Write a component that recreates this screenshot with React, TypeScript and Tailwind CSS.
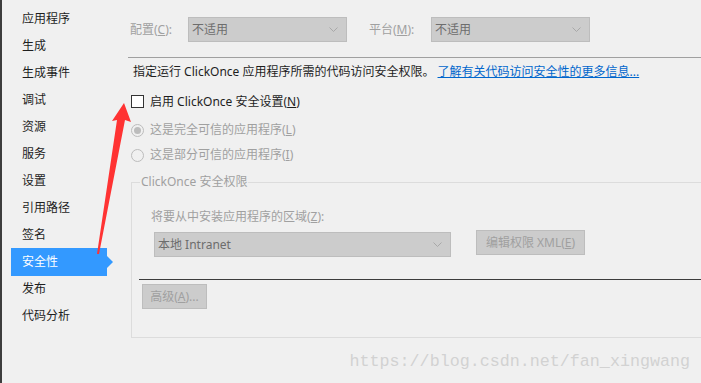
const navItems = [
  "应用程序",
  "生成",
  "生成事件",
  "调试",
  "资源",
  "服务",
  "设置",
  "引用路径",
  "签名",
  "安全性",
  "发布",
  "代码分析",
];

function Chevron() {
  return (
    <svg width="9" height="5" viewBox="0 0 9 5" className="shrink-0">
      <path d="M0.5 0.5 L4.5 4.5 L8.5 0.5" fill="none" stroke="#a8a8a8" strokeWidth="1" />
    </svg>
  );
}

function Dropdown({ value, width }: { value: string; width: string }) {
  return (
    <div
      className={`flex h-[25px] ${width} items-center justify-between border border-[#bdbdbd] bg-[#cccccc] pl-[3px] pr-[8px] text-[#6d6d6d]`}
    >
      <span>{value}</span>
      <Chevron />
    </div>
  );
}

function Sidebar() {
  return (
    <nav className="w-[126px] shrink-0 pt-[5px]">
      {navItems.map((item) => {
        const active = item === "安全性";
        return (
          <div key={item} className="relative ml-[9px] h-[27px]">
            {active ? (
              <div className="relative flex h-[28px] w-[96px] items-center bg-[#3399ff] pl-[11px] text-white">
                {item}
                <span className="absolute left-full top-1/2 -translate-y-1/2 border-y-[6px] border-l-[6px] border-y-transparent border-l-[#3399ff]" />
              </div>
            ) : (
              <div className="flex h-[27px] items-center pl-[11px] text-[#1e1e1e]">{item}</div>
            )}
          </div>
        );
      })}
    </nav>
  );
}

function Radio({ checked, label }: { checked?: boolean; label: React.ReactNode }) {
  return (
    <div className="flex h-[14px] items-center pl-[3px] text-[#a0a0a0]">
      <span className="flex h-[13px] w-[13px] items-center justify-center rounded-full border border-[#bcbcbc] bg-[#f0f0f0]">
        {checked && <span className="h-[7px] w-[7px] rounded-full bg-[#bcbcbc]" />}
      </span>
      <span className="ml-[6px]">{label}</span>
    </div>
  );
}

function DisabledButton({ children, className }: { children: React.ReactNode; className?: string }) {
  return (
    <div
      className={`flex h-[25px] items-center justify-center border border-[#bdbdbd] bg-[#cccccc] text-[#a0a0a0] ${className ?? ""}`}
    >
      {children}
    </div>
  );
}

export default function App() {
  return (
    <div className="relative flex h-[383px] w-[701px] overflow-hidden border-l-2 border-[#3d3d3d] bg-[#f0f0f0] font-['Noto_Sans','Noto_Sans_CJK_SC',sans-serif] text-[12px] leading-[16px]">
      <Sidebar />

      <main className="min-w-0 flex-1">
        <div className="mt-[17px] flex h-[25px] items-center">
          <span className="w-[60px] pl-[2px] text-[#a0a0a0]">
            配置(<u>C</u>):
          </span>
          <Dropdown value="不适用" width="w-[159px]" />
          <span className="ml-[22px] w-[62px] text-[#a0a0a0]">
            平台(<u>M</u>):
          </span>
          <Dropdown value="不适用" width="w-[159px]" />
        </div>

        <div className="mt-[15px] border-t border-[#a0a0a0]" />

        <p className="mt-[6px] h-[16px] whitespace-nowrap pl-[5px] text-[#1e1e1e]">
          指定运行 ClickOnce 应用程序所需的代码访问安全权限。
          <a className="ml-[3px] text-[#0066cc] underline">了解有关代码访问安全性的更多信息...</a>
        </p>

        <label className="mt-[15px] flex h-[13px] items-center pl-[3px] text-[#1e1e1e]">
          <span className="h-[13px] w-[13px] border border-[#333333] bg-white" />
          <span className="ml-[6px]">
            启用 ClickOnce 安全设置(<u>N</u>)
          </span>
        </label>

        <div className="mt-[15px]">
          <Radio
            checked
            label={
              <>
                这是完全可信的应用程序(<u>L</u>)
              </>
            }
          />
        </div>
        <div className="mt-[11px]">
          <Radio
            label={
              <>
                这是部分可信的应用程序(<u>I</u>)
              </>
            }
          />
        </div>

        <section className="relative ml-[3px] mt-[20px] w-[700px] border border-[#dcdcdc] pb-[28px] pl-[7px]">
          <span className="absolute left-[8px] top-[-9px] bg-[#f0f0f0] px-[1px] text-[#a0a0a0]">
            ClickOnce 安全权限
          </span>
          <div className="mt-[26px] pl-[12px] text-[#a0a0a0]">
            将要从中安装应用程序的区域(<u>Z</u>):
          </div>
          <div className="mt-[5px] flex items-start pl-[15px]">
            <div className="mt-[2px]">
              <Dropdown value="本地 Intranet" width="w-[297px]" />
            </div>
            <DisabledButton className="ml-[25px] w-[109px]">
              编辑权限 XML(<u>E</u>)
            </DisabledButton>
          </div>
          <div className="mt-[22px] border-t border-[#3c3c3c]" />
          <DisabledButton className="ml-[3px] mt-[4px] w-[65px]">
            高级(<u>A</u>)...
          </DisabledButton>
        </section>
      </main>

      <svg className="pointer-events-none absolute left-[-2px] top-0" width="701" height="383">
        <polygon
          points="124,103 131,122 125,120 99,254 97,254 117,120 112,121"
          fill="#ff3333"
        />
      </svg>

      <span className="pointer-events-none absolute right-[11px] top-[352px] font-['Liberation_Mono',monospace] text-[16.7px] leading-[20px] text-[#d2d2d2]">
        https://blog.csdn.net/fan_xingwang
      </span>
    </div>
  );
}
